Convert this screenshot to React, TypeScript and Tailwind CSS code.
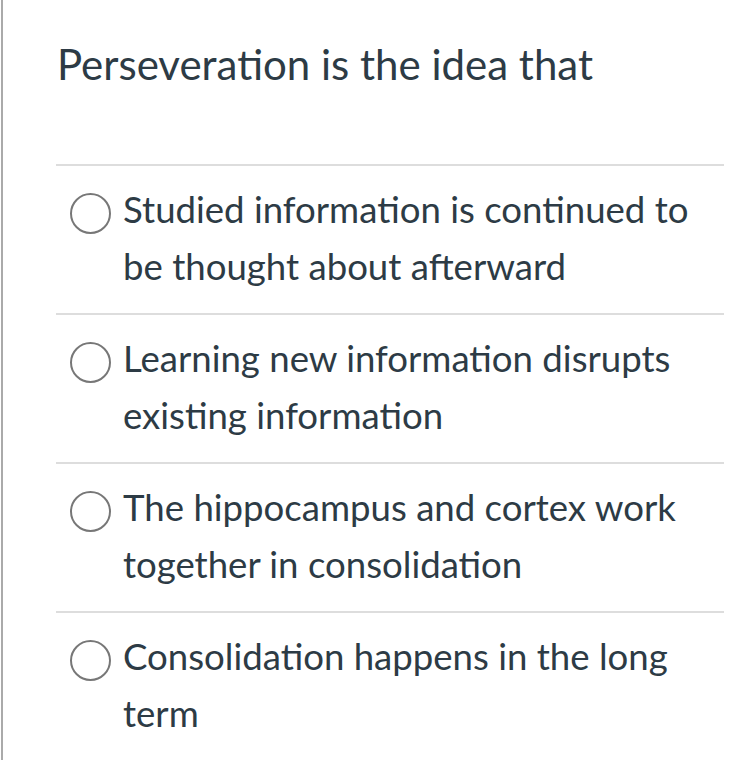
import React from "react";

const options = [
  ["Studied information is continued to", "be thought about afterward"],
  ["Learning new information disrupts", "existing information"],
  ["The hippocampus and cortex work", "together in consolidation"],
  ["Consolidation happens in the long", "term"],
];

export default function App() {
  return (
    <div
      className="w-[732px] h-[760px] bg-white overflow-hidden text-[#2d3b45]"
      style={{ fontFamily: "Lato, 'Noto Sans', sans-serif" }}
    >
      <div className="ml-px h-full border-l-2 border-[#aaaaaa] pl-[53px] pr-[8px]">
        <div className="pt-[39px] text-[42px] leading-[50px] pl-[1px]">
          Perseveration is the idea that
        </div>
        <div className="mt-[75px]">
          {options.map((o, i) => (
            <div key={i} className="border-t-2 border-[#dddddd] pt-[15px] pb-[18px] pl-[14px] flex items-start">
              <div className="mt-[12px] w-[41px] h-[41px] shrink-0 rounded-full border-[2.5px] border-[#777777]" />
              <div className="ml-[12px] text-[36.6px] leading-[57px] whitespace-nowrap">
                <div>{o[0]}</div>
                <div>{o[1]}</div>
              </div>
            </div>
          ))}
        </div>
      </div>
    </div>
  );
}
